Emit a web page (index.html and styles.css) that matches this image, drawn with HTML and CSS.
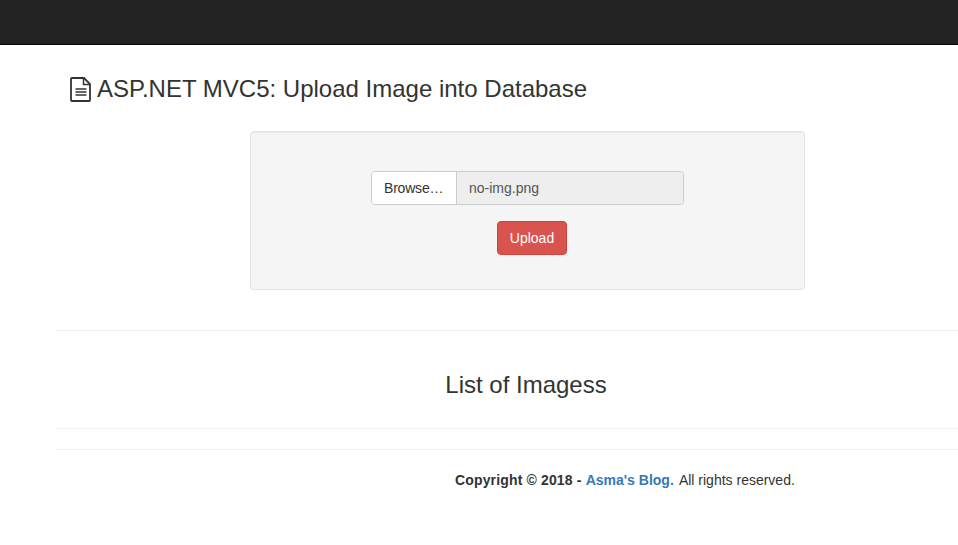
FILE: index.html
```html
<!DOCTYPE html>
<html lang="en">
<head>
  <meta charset="UTF-8">
  <title>ASP.NET MVC5: Upload Image into Database</title>
  <link rel="stylesheet" href="styles.css">
</head>
<body>
  <nav class="navbar"></nav>

  <main class="container">
    <h3 class="page-title">
      <svg class="file-icon" width="22" height="25" viewBox="0 0 22 25">
        <path d="M2 1h12l6 6v16a1 1 0 0 1-1 1h-17a1 1 0 0 1-1-1v-21a1 1 0 0 1 1-1z" fill="none" stroke="#333" stroke-width="1.800"/>
        <path d="M13.500 1.500v6h6.500" fill="none" stroke="#333" stroke-width="1.500"/>
        <path d="M5.500 12h11M5.500 15h11M5.500 18h11" stroke="#333" stroke-width="1.400"/>
      </svg>
      ASP.NET MVC5: Upload Image into Database
    </h3>

    <section class="well">
      <div class="file-group">
        <span class="browse">Browse…</span>
        <span class="file-name">no-img.png</span>
      </div>
      <button class="btn-upload">Upload</button>
    </section>

    <hr class="rule-top">
    <h3 class="list-title">List of Imagess</h3>
    <hr class="rule-list">
    <hr class="rule-footer">

    <footer class="footer">
      <strong>Copyright © 2018 - <a href="#">Asma's Blog.</a></strong> All rights reserved.
    </footer>
  </main>
</body>
</html>
```

FILE: styles.css
```css
/* Basic reset */
* {
  margin: 0;
  padding: 0;
  box-sizing: border-box;
}

body {
  font-family: "Liberation Sans", Arial, sans-serif;
  font-size: 14px;
  line-height: 20px;
  color: #333;
  background-color: #fff;
  overflow-x: hidden;
}

.navbar {
  height: 45px;
  background-color: #222;
  border-bottom: 1px solid #080808;
}

.container {
  margin-left: 55px;
}

.page-title {
  display: flex;
  align-items: center;
  gap: 5px;
  margin-top: 31px;
  padding-left: 15px;
  font-size: 24px;
  font-weight: 500;
  line-height: 26px;
}

.file-icon {
  flex: none;
}

.well {
  display: flex;
  flex-direction: column;
  align-items: center;
  gap: 16px;
  width: 555px;
  height: 159px;
  margin: 29px 0 0 195px;
  padding-top: 39px;
  background-color: #f5f5f5;
  border: 1px solid #e3e3e3;
  border-radius: 4px;
  box-shadow: inset 0 1px 1px rgba(0, 0, 0, 0.05);
}

.file-group {
  display: flex;
  width: 313px;
  height: 34px;
  border: 1px solid #ccc;
  border-radius: 4px;
  overflow: hidden;
}

.browse {
  width: 85px;
  padding: 6px 12px;
  background-color: #fff;
  border-right: 1px solid #ccc;
  white-space: nowrap;
  letter-spacing: -0.2px;
}

.file-name {
  flex: 1;
  padding: 6px 12px;
  color: #555;
  background-color: #eee;
}

.btn-upload {
  width: 70px;
  height: 34px;
  margin-left: 9px;
  font-family: inherit;
  font-size: 14px;
  color: #fff;
  background-color: #d9534f;
  border: 1px solid #d43f3a;
  border-radius: 4px;
}

hr {
  border: 0;
  border-top: 1px solid #eee;
}

.rule-top {
  margin-top: 40px;
}

.list-title {
  margin-top: 41px;
  padding-left: 39px;
  font-size: 24px;
  font-weight: 500;
  line-height: 26px;
  text-align: center;
}

.rule-list {
  margin-top: 30px;
}

.rule-footer {
  margin-top: 20px;
}

.footer {
  margin-top: 20px;
  padding-left: 400px;
}

.footer strong {
  letter-spacing: 0.15px;
}

.footer a {
  margin-right: 2px;
  color: #337ab7;
  text-decoration: none;
  letter-spacing: 0;
}
```
